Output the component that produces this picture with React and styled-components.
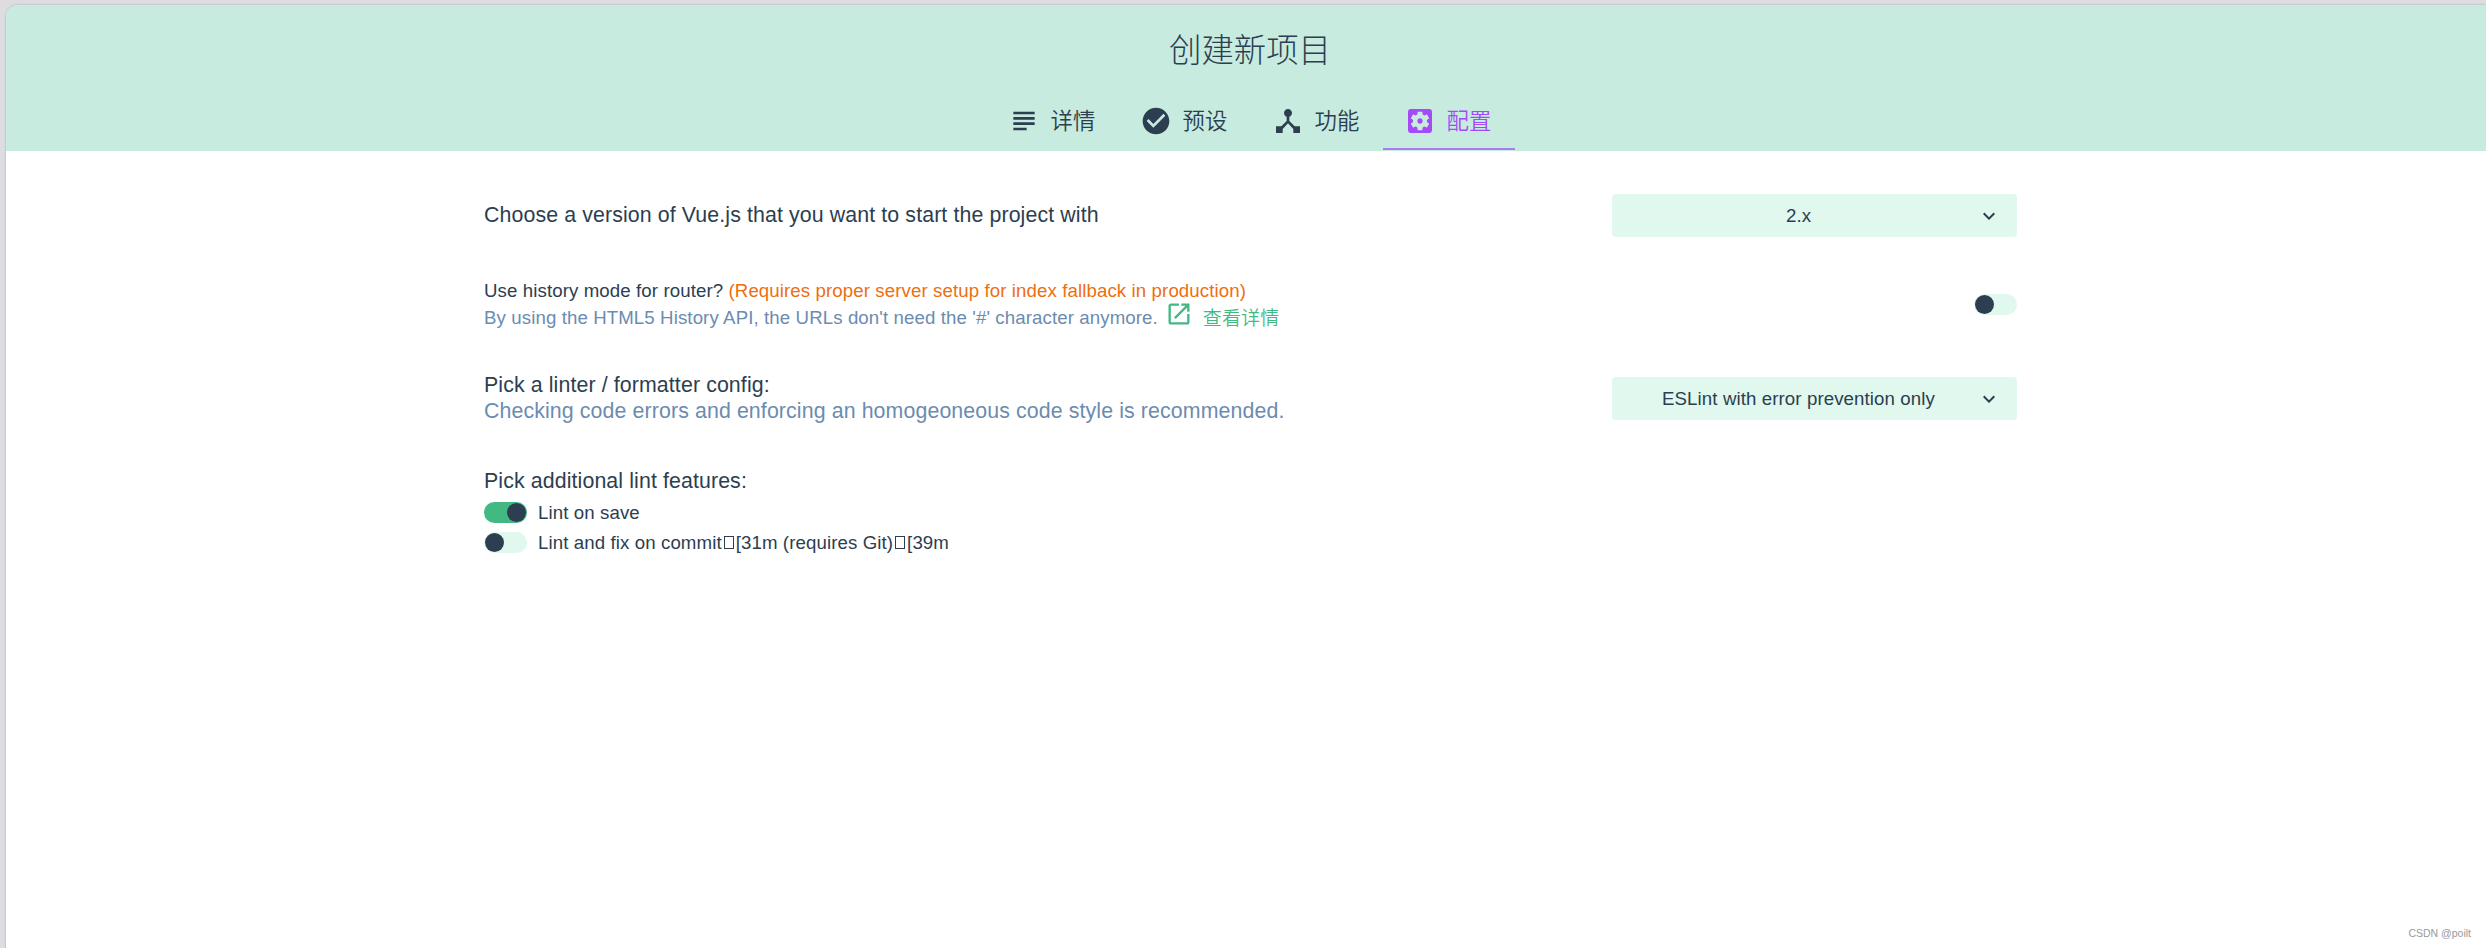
import React from "react";
import styled, { createGlobalStyle } from "styled-components";

const GlobalStyle = createGlobalStyle`
  * { box-sizing: border-box; }
  body {
    margin: 0;
    background: #dddde1;
    overflow: hidden;
    font-family: "Liberation Sans", "Noto Sans CJK SC", sans-serif;
    color: #2c3e50;
  }
`;

const Frame = styled.div`
  height: 948px;
  padding: 5px 0 0 6px;
  overflow: hidden;
`;

const Window = styled.div`
  width: 2490px;
  height: 960px;
  background: #fff;
  border-radius: 12px 12px 0 0;
  overflow: hidden;
  box-shadow: 0 0 2px rgba(0, 0, 0, 0.3);
`;

const Header = styled.header`
  height: 146px;
  background: #c7ebdf;
  display: flex;
  flex-direction: column;
  align-items: center;
`;

const Title = styled.h1`
  margin: 19px 2px 0 0;
  height: 48px;
  font-size: 32.4px;
  line-height: 48px;
  font-weight: 300;
  font-family: "Noto Sans CJK SC", sans-serif;
`;

const Tabs = styled.nav`
  display: flex;
  margin-top: 21px;
`;

const Tab = styled.a`
  display: flex;
  align-items: center;
  gap: 10.5px;
  width: 132px;
  height: 57px;
  padding: 1px 0 0 21px;
  font: 350 22.4px/30px "Noto Sans CJK SC", sans-serif;
  color: ${(p) => (p.$active ? "#a54af8" : "#2c3e50")};
  border-bottom: 2px solid ${(p) => (p.$active ? "#a97df0" : "transparent")};
`;

const TabLabel = styled.span`
  padding-bottom: 4px;
`;

const Icon = styled.svg`
  flex: none;
  width: ${(p) => p.$size}px;
  height: ${(p) => p.$size}px;
  fill: currentColor;
`;

const Content = styled.main`
  width: 1533px;
  margin: 0 auto 0 478px;
  padding-top: 43px;
  letter-spacing: 0.1px;
`;

const Row = styled.section`
  display: flex;
  align-items: center;
  justify-content: space-between;
  height: ${(p) => p.$height}px;
  margin-bottom: ${(p) => p.$gap}px;
`;

const Question = styled.div`
  padding-bottom: 1px;
`;

const Large = styled.div`
  font-size: 21.33px;
  line-height: 26px;
  letter-spacing: 0.11px;
  white-space: pre;
  color: ${(p) => (p.$muted ? "#6b8cb0" : "inherit")};
`;

const Small = styled.div`
  display: flex;
  align-items: center;
  font-size: 18.67px;
  line-height: 27px;
  height: 27px;
  white-space: pre;
  color: ${(p) => (p.$muted ? "#6b8cb0" : "inherit")};
`;

const Warning = styled.span`
  color: #ee6e10;
`;

const Link = styled.a`
  display: flex;
  align-items: center;
  gap: 9.5px;
  margin-left: 7.5px;
  color: #42b983;
  font: 350 19px/27px "Noto Sans CJK SC", sans-serif;

  svg {
    margin-bottom: 7px;
  }
`;

const LinkLabel = styled.span`
  padding-bottom: 3px;
`;

const SelectBox = styled.div`
  display: flex;
  align-items: center;
  width: 405px;
  height: 43px;
  padding-right: 16px;
  border-radius: 4px;
  background: #e0f8ed;
  font-size: 18.67px;
`;

const SelectValue = styled.span`
  flex: 1;
  text-align: center;
  padding-left: 8px;
`;

const Track = styled.span`
  display: flex;
  justify-content: ${(p) => (p.$on ? "flex-end" : "flex-start")};
  width: 43px;
  height: 21px;
  padding: 1px;
  border-radius: 11px;
  background: ${(p) => (p.$on ? "#42b983" : "#e0f8ed")};
`;

const Knob = styled.span`
  width: 19px;
  height: 19px;
  border-radius: 50%;
  background: #2c3e50;
`;

const FeatureSection = styled.section`
  padding-top: 1px;
`;

const FeatureList = styled.div`
  display: flex;
  flex-direction: column;
  gap: 1px;
  padding-top: 4px;
`;

const Feature = styled.div`
  display: flex;
  align-items: center;
  gap: 11px;
  height: 29px;
  font-size: 18.67px;
  white-space: pre;
`;

const ControlChar = styled.span`
  display: inline-block;
  width: 10px;
  height: 13px;
  margin: 0 2px;
  border: 1px solid #2c3e50;
  vertical-align: baseline;
`;

const Watermark = styled.div`
  position: absolute;
  right: 15px;
  bottom: 8px;
  font-size: 10.5px;
  line-height: 14px;
  color: #999;
`;

const TABS = [
  { label: "详情", path: "M4 5h16v2H4zM4 9h16v2H4zM4 13h16v2H4zM4 17h10v2H4z" },
  {
    label: "预设",
    path: "M12 2C6.48 2 2 6.48 2 12s4.48 10 10 10 10-4.48 10-10S17.52 2 12 2zm-2 15l-5-5 1.41-1.41L10 14.17l7.59-7.59L19 8l-9 9z",
  },
  {
    label: "功能",
    path: "M17 16l-4-4V8.82C14.16 8.4 15 7.3 15 6c0-1.66-1.34-3-3-3S9 4.34 9 6c0 1.3.84 2.4 2 2.82V12l-4 4H3v5h5v-3.05l4-4.2 4 4.2V21h5v-5h-4z",
  },
  {
    label: "配置",
    active: true,
    path: "M12 10c-1.1 0-2 .9-2 2s.9 2 2 2 2-.9 2-2-.9-2-2-2zm7-7H5c-1.11 0-2 .9-2 2v14c0 1.1.89 2 2 2h14c1.11 0 2-.9 2-2V5c0-1.1-.89-2-2-2zm-1.75 9c0 .23-.02.46-.05.68l1.48 1.16c.13.11.17.3.08.45l-1.4 2.42c-.09.15-.27.21-.43.15l-1.74-.7c-.36.28-.76.51-1.18.69l-.26 1.85c-.03.17-.18.3-.35.3h-2.8c-.17 0-.32-.13-.35-.29l-.26-1.85c-.43-.18-.82-.41-1.18-.69l-1.74.7c-.16.06-.34 0-.43-.15l-1.4-2.42c-.09-.15-.05-.34.08-.45l1.48-1.16c-.03-.23-.05-.46-.05-.69 0-.23.02-.46.05-.68l-1.48-1.16c-.13-.11-.17-.3-.08-.45l1.4-2.42c.09-.15.27-.21.43-.15l1.74.7c.36-.28.76-.51 1.18-.69l.26-1.85c.03-.17.18-.3.35-.3h2.8c.17 0 .32.13.35.29l.26 1.85c.43.18.82.41 1.18.69l1.74-.7c.16-.06.34 0 .43.15l1.4 2.42c.09.15.05.34-.08.45l-1.48 1.16c.03.23.05.46.05.69z",
  },
];

const Select = ({ value }) => (
  <SelectBox>
    <SelectValue>{value}</SelectValue>
    <Icon $size={24} viewBox="0 0 24 24">
      <path d="M7.41 8.59L12 13.17l4.59-4.58L18 10l-6 6-6-6 1.41-1.41z" />
    </Icon>
  </SelectBox>
);

const Switch = ({ on }) => (
  <Track $on={on}>
    <Knob />
  </Track>
);

export default function App() {
  return (
    <Frame>
      <GlobalStyle />
      <Window>
        <Header>
          <Title>创建新项目</Title>
          <Tabs>
            {TABS.map((t) => (
              <Tab key={t.label} $active={t.active}>
                <Icon $size={32} viewBox="0 0 24 24">
                  <path d={t.path} />
                </Icon>
                <TabLabel>{t.label}</TabLabel>
              </Tab>
            ))}
          </Tabs>
        </Header>
        <Content>
          <Row $height={43} $gap={40}>
            <Question>
              <Large>Choose a version of Vue.js that you want to start the project with</Large>
            </Question>
            <Select value="2.x" />
          </Row>
          <Row $height={54} $gap={46}>
            <div>
              <Small>
                Use history mode for router? <Warning>(Requires proper server setup for index fallback in production)</Warning>
              </Small>
              <Small $muted>
                By using the HTML5 History API, the URLs don't need the '#' character anymore.
                <Link>
                  <Icon $size={28} viewBox="0 0 24 24">
                    <path d="M19 19H5V5h7V3H5c-1.11 0-2 .9-2 2v14c0 1.1.89 2 2 2h14c1.1 0 2-.9 2-2v-7h-2v7zM14 3v2h3.59l-9.83 9.83 1.41 1.41L19 6.41V10h2V3h-7z" />
                  </Icon>
                  <LinkLabel>查看详情</LinkLabel>
                </Link>
              </Small>
            </div>
            <Switch />
          </Row>
          <Row $height={43} $gap={47}>
            <Question>
              <Large>Pick a linter / formatter config:</Large>
              <Large $muted>Checking code errors and enforcing an homogeoneous code style is recommended.</Large>
            </Question>
            <Select value="ESLint with error prevention only" />
          </Row>
          <FeatureSection>
            <Large>Pick additional lint features:</Large>
            <FeatureList>
              <Feature>
                <Switch on />
                Lint on save
              </Feature>
              <Feature>
                <Switch />
                <span>
                  Lint and fix on commit
                  <ControlChar />
                  [31m (requires Git)
                  <ControlChar />
                  [39m
                </span>
              </Feature>
            </FeatureList>
          </FeatureSection>
        </Content>
      </Window>
      <Watermark>CSDN @poilt</Watermark>
    </Frame>
  );
}
